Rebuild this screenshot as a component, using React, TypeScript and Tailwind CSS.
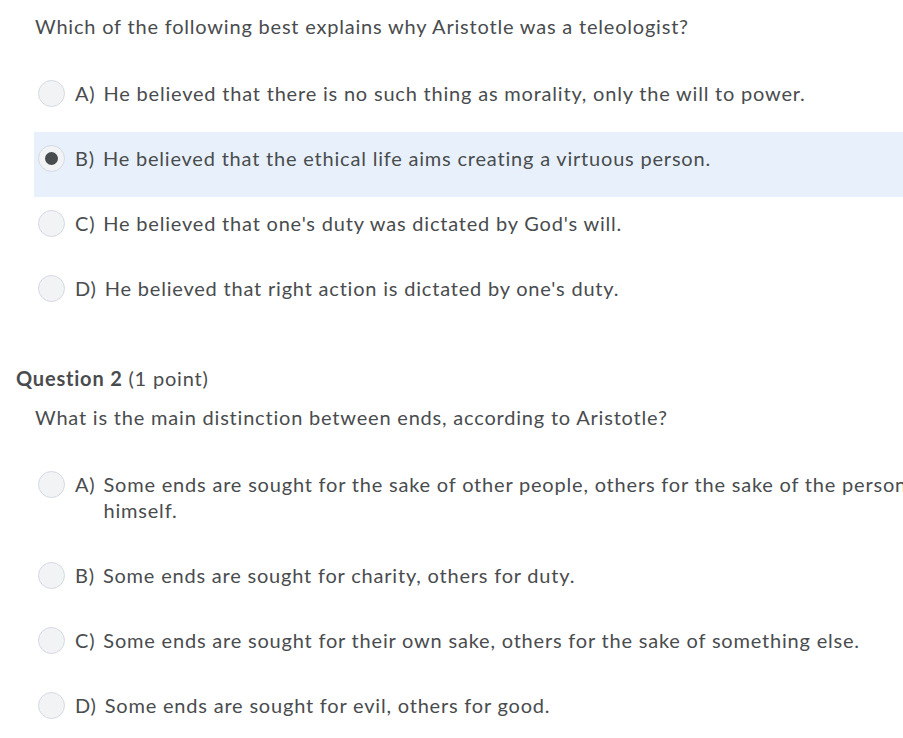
import React from "react";

type Opt = { label: string; text: string; selected?: boolean };

const q1: Opt[] = [
  { label: "A)", text: "He believed that there is no such thing as morality, only the will to power." },
  { label: "B)", text: "He believed that the ethical life aims creating a virtuous person.", selected: true },
  { label: "C)", text: "He believed that one's duty was dictated by God's will." },
  { label: "D)", text: "He believed that right action is dictated by one's duty." },
];

const q2: Opt[] = [
  { label: "A)", text: "Some ends are sought for the sake of other people, others for the sake of the person himself." },
  { label: "B)", text: "Some ends are sought for charity, others for duty." },
  { label: "C)", text: "Some ends are sought for their own sake, others for the sake of something else." },
  { label: "D)", text: "Some ends are sought for evil, others for good." },
];

function Radio({ selected }: { selected?: boolean }) {
  return (
    <div className="w-[27px] h-[27px] shrink-0 rounded-full border border-[#d3d9e3] bg-[#f2f3f5] flex items-center justify-center">
      {selected && <div className="w-[13px] h-[13px] rounded-full bg-[#494c4e]" />}
    </div>
  );
}

function Option({ o }: { o: Opt }) {
  return (
    <div className={"flex items-start pt-[13px] pb-[25px] pl-[4px] " + (o.selected ? "bg-[#e8f1fb]" : "")}>
      <Radio selected={o.selected} />
      <div className="flex ml-[10px] leading-[26px] pb-[1px]">
        <span className="shrink-0 mr-[8px]">{o.label}</span>
        <span>{o.text}</span>
      </div>
    </div>
  );
}

export default function App() {
  return (
    <div
      className="w-[903px] h-[738px] overflow-hidden bg-white text-[#494c4e] text-[20px] tracking-[0.8px]"
      style={{ fontFamily: "Lato, 'Noto Sans', sans-serif" }}
    >
      <div className="w-[960px]">
        <div className="pl-[34px] pr-[20px]">
          <p className="pl-[1px] pt-[13px] leading-[26px]">
            Which of the following best explains why Aristotle was a teleologist?
          </p>
          <div className="mt-[28px]">
            {q1.map((o) => (
              <Option key={o.label} o={o} />
            ))}
          </div>
        </div>
        <div className="pl-[16px] mt-[38px] leading-[26px]">
          <span className="font-bold">Question 2</span> (1 point)
        </div>
        <div className="pl-[34px] pr-[20px]">
          <p className="pl-[1px] mt-[13px] leading-[26px]">
            What is the main distinction between ends, according to Aristotle?
          </p>
          <div className="mt-[28px]">
            {q2.map((o) => (
              <Option key={o.label} o={o} />
            ))}
          </div>
        </div>
      </div>
    </div>
  );
}
